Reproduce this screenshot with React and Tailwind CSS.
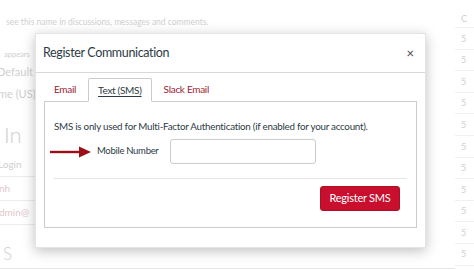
import React, { useState } from 'react';

const rightRows = ['5', '5', '5', '5', '5', '5', '5', '5', '5', '5', '5'];

function BackgroundPage() {
  return (
    <div className="absolute inset-0 flex text-[#cfcfcf]">
      <div className="flex-1 flex flex-col">
        <p className="pl-[6px] pt-[16px] text-[8.5px] leading-[12px]">
          see this name in discussions, messages and comments.
        </p>
        <p className="pl-[4px] mt-[22px] text-[7.5px] leading-[10px]">appears</p>
        <p className="-ml-[3px] mt-[5px] text-[11px] leading-[14px]">Default</p>
        <p className="-ml-[2px] mt-[8px] text-[11px] leading-[14px]">me (US)</p>
        <p className="pl-[4px] mt-[21px] text-[22px] leading-[26px] font-light">In</p>
        <div className="mt-[5px] w-[36px] flex flex-col text-[10px]">
          <div className="h-[24px] flex items-center border-b border-[#ececec] -ml-[2px]">Login</div>
          <div className="h-[24px] flex items-center border-b border-[#ececec] text-[#e3c6cb] -ml-[1px]">nh</div>
          <div className="h-[24px] flex items-center border-b border-[#ececec] text-[#e3c6cb] -ml-[1px]">dmin@</div>
        </div>
        <p className="pl-[3px] mt-[19px] text-[17px] leading-[20px] font-light">S</p>
        <div className="mt-auto border-b border-[#e6e6e6] mb-[1px]" />
      </div>
      <div className="w-[19px] flex flex-col pt-[11px] text-[9px]">
        <div className="h-[17px] flex items-center pl-[6px] border-b border-[#f0f0f0]">C</div>
        {rightRows.map((r, i) => (
          <div key={i} className="h-[21.6px] flex items-center pl-[6px] border-b border-[#f0f0f0]">
            {r}
          </div>
        ))}
      </div>
    </div>
  );
}

function Arrow() {
  return (
    <svg width="42" height="12" viewBox="0 0 42 12">
      <line x1="0" y1="6" x2="32" y2="6" stroke="#9c0f17" strokeWidth="2.4" />
      <polygon points="29,0.5 41,6 29,11.5" fill="#9c0f17" />
    </svg>
  );
}

export default function App() {
  const [tab, setTab] = useState('sms');
  const tabs = [
    { id: 'email', label: 'Email' },
    { id: 'sms', label: 'Text (SMS)' },
    { id: 'slack', label: 'Slack Email' },
  ];

  return (
    <div className="relative w-[474px] h-[270px] overflow-hidden bg-white" style={{ fontFamily: 'Lato, "Open Sans", sans-serif' }}>
      <BackgroundPage />

      {/* Dialog */}
      <div className="absolute left-[35px] top-[33px] w-[391px] h-[215px] bg-white border border-[#e4e4e4] shadow-[0_3px_12px_rgba(0,0,0,0.25)] flex flex-col">
        <div className="h-[39px] flex items-center justify-between pl-[7px] pr-[11px] border-b border-[#d8d8d8]">
          <h2 className="text-[12.5px] tracking-[-0.35px] text-[#2d3b45]">Register Communication</h2>
          <button className="text-[#444] text-[13px] leading-none">×</button>
        </div>

        <div className="flex-1 px-[8px] pt-[5px] pb-[19px] flex flex-col">
          <div className="flex h-[23px] pl-[1px] gap-[3px]">
            {tabs.map((t) => {
              const active = t.id === tab;
              return (
                <button
                  key={t.id}
                  onClick={() => setTab(t.id)}
                  className={
                    active
                      ? 'h-[24px] px-[9px] text-[10px] tracking-[-0.3px] text-[#2d3b45] underline underline-offset-2 bg-white border border-[#c7cdd1] border-b-white rounded-t-[2px] relative z-10'
                      : 'h-[23px] px-[9px] text-[10px] tracking-[-0.3px] text-[#9b2333]'
                  }
                >
                  {t.label}
                </button>
              );
            })}
          </div>
          <div className="flex-1 border border-[#c7cdd1] px-[9px] flex flex-col">
            <p className="mt-[17px] text-[9.8px] tracking-[-0.25px] text-[#2d3b45] leading-[14px]">
              SMS is only used for Multi-Factor Authentication (if enabled for your account).
            </p>
            <div className="mt-[6px] flex items-center -ml-[4px]">
              <Arrow />
              <span className="ml-[5px] w-[73px] text-[9.5px] tracking-[-0.3px] text-[#2d3b45]">Mobile Number</span>
              <input className="w-[146px] h-[25px] border border-[#c7cdd1] rounded-[3px] bg-white outline-none" />
            </div>
            <div className="mt-[14px] border-t border-[#e5e5e5]" />
            <div className="mt-[7px] flex justify-end pr-[7px]">
              <button className="w-[80px] h-[25px] bg-[#c8102e] text-white text-[11px] tracking-[-0.25px] rounded-[3px] border border-[#b00d26]">
                Register SMS
              </button>
            </div>
          </div>
        </div>
      </div>
    </div>
  );
}
